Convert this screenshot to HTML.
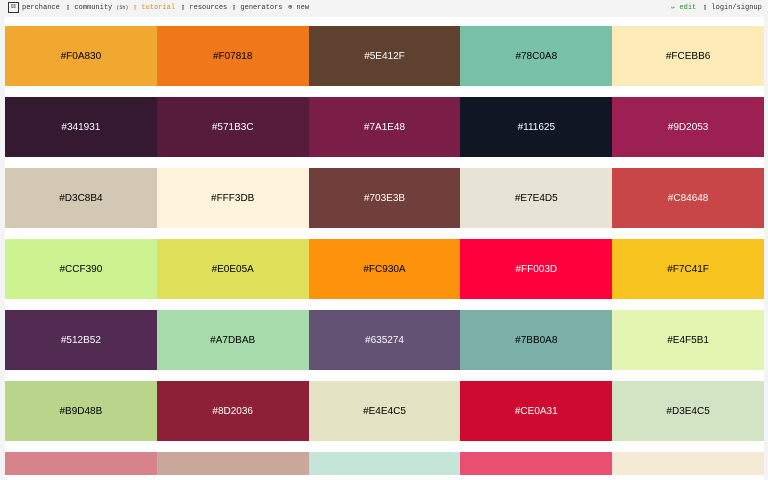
<!DOCTYPE html>
<html><head><meta charset="utf-8"><style>
html,body{margin:0;width:768px;height:480px;overflow:hidden;}
body{background:#f4f4f4;font-family:"Liberation Sans",sans-serif;position:relative}
.hdr{position:absolute;top:0;left:0;right:0;height:17px;font-family:"Liberation Mono",monospace;font-size:7px;color:#333;line-height:17px}
.hdr span{position:absolute;top:0;white-space:nowrap}
.main{position:absolute;left:5px;top:17px;width:759px;height:463px;background:#fff;overflow:hidden}
.row{position:absolute;left:0;width:759px;height:60px;display:flex}
.row div{flex:1;display:flex;align-items:center;justify-content:center;font-size:10px;color:#000}
.row div.d{color:#fff}
</style></head><body>
<div class="hdr">
<span style="left:8px;top:2px;width:9px;height:9px;border:1px solid #333;line-height:9px;font-size:7px;text-align:center">⚄</span>
<span style="left:22px">perchance</span>
<span style="left:66px">▯ community <small style="font-size:5px">(5h)</small></span>
<span style="left:133px;color:#e8832a">▯ tutorial</span>
<span style="left:181px">▯ resources</span>
<span style="left:232px">▯ generators</span>
<span style="left:288px">⊕ new</span>
<span style="left:671px;color:#2a8a2a">✏ edit</span>
<span style="left:703px">▯ login/signup</span>
</div>
<div class="main">
<div class="row" style="top:9px"><div style="background:#F0A830">#F0A830</div><div style="background:#F07818">#F07818</div><div class="d" style="background:#5E412F">#5E412F</div><div style="background:#78C0A8">#78C0A8</div><div style="background:#FCEBB6">#FCEBB6</div></div>
<div class="row" style="top:80px"><div class="d" style="background:#341931">#341931</div><div class="d" style="background:#571B3C">#571B3C</div><div class="d" style="background:#7A1E48">#7A1E48</div><div class="d" style="background:#111625">#111625</div><div class="d" style="background:#9D2053">#9D2053</div></div>
<div class="row" style="top:151px"><div style="background:#D3C8B4">#D3C8B4</div><div style="background:#FFF3DB">#FFF3DB</div><div class="d" style="background:#703E3B">#703E3B</div><div style="background:#E7E4D5">#E7E4D5</div><div class="d" style="background:#C84648">#C84648</div></div>
<div class="row" style="top:222px"><div style="background:#CCF390">#CCF390</div><div style="background:#E0E05A">#E0E05A</div><div style="background:#FC930A">#FC930A</div><div class="d" style="background:#FF003D">#FF003D</div><div style="background:#F7C41F">#F7C41F</div></div>
<div class="row" style="top:293px"><div class="d" style="background:#512B52">#512B52</div><div style="background:#A7DBAB">#A7DBAB</div><div class="d" style="background:#635274">#635274</div><div style="background:#7BB0A8">#7BB0A8</div><div style="background:#E4F5B1">#E4F5B1</div></div>
<div class="row" style="top:364px"><div style="background:#B9D48B">#B9D48B</div><div class="d" style="background:#8D2036">#8D2036</div><div style="background:#E4E4C5">#E4E4C5</div><div class="d" style="background:#CE0A31">#CE0A31</div><div style="background:#D3E4C5">#D3E4C5</div></div>
<div class="row" style="top:435px;height:23px"><div style="background:#D8828A"></div><div style="background:#C9A89B"></div><div style="background:#C6E5D9"></div><div style="background:#E84F73"></div><div style="background:#F5EAD5"></div></div>
</div>
</body></html>
